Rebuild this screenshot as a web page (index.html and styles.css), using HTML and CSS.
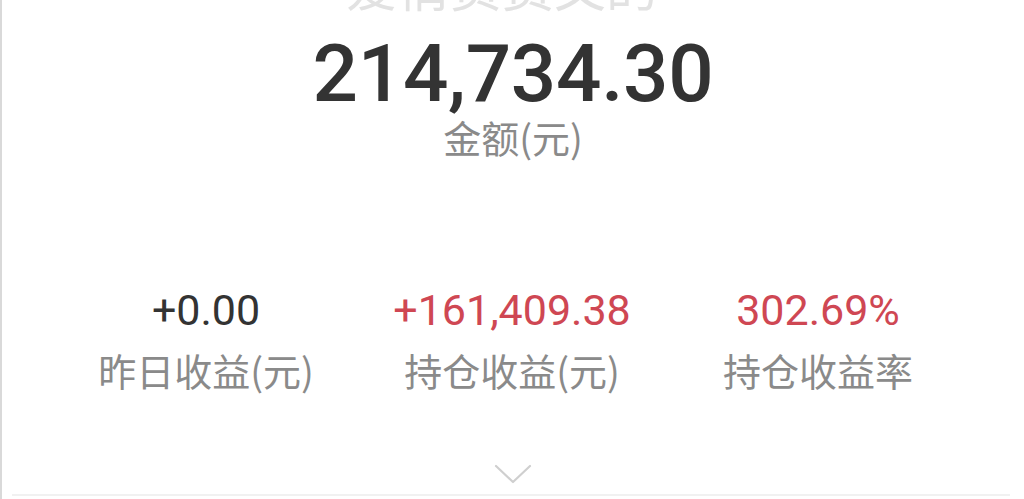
FILE: index.html
```html
<!DOCTYPE html>
<html lang="zh-CN">
<head>
<meta charset="utf-8">
<title>持仓</title>
<link rel="stylesheet" href="styles.css">
</head>
<body>
<div class="page">
  <div class="marquee">爱情资费文的…</div>
  <div class="total">214,734.30</div>
  <div class="total-label">金额(元)</div>
  <div class="stats">
    <div class="stat">
      <div class="val">+0.00</div>
      <div class="lab">昨日收益(元)</div>
    </div>
    <div class="stat">
      <div class="val up">+161,409.38</div>
      <div class="lab">持仓收益(元)</div>
    </div>
    <div class="stat">
      <div class="val up">302.69%</div>
      <div class="lab">持仓收益率</div>
    </div>
  </div>
  <div class="more">
    <svg width="38" height="20" viewBox="0 0 38 20"><polyline points="2,2 19,18 36,2" fill="none" stroke="#cfcfcf" stroke-width="2.2" stroke-linecap="round" stroke-linejoin="round"/></svg>
  </div>
  <div class="divider"></div>
</div>
</body>
</html>
```
FILE: styles.css
```css
html, body {
  margin: 0;
  padding: 0;
  background: #ffffff;
  overflow: hidden;
}
.page {
  height: 499px;
  border-left: 2px solid #d9d9d9;
  box-sizing: border-box;
  display: flex;
  flex-direction: column;
  align-items: center;
  font-family: Roboto, "Noto Sans CJK SC", sans-serif;
  overflow: hidden;
}
.marquee {
  font-family: "Noto Sans CJK SC", sans-serif;
  font-size: 52px;
  line-height: 50px;
  color: #e2e2e2;
  margin-top: -40px;
  height: 50px;
  padding-left: 30px;
}
.total {
  font-family: Roboto, sans-serif;
  font-size: 80px;
  line-height: 80px;
  font-weight: 500;
  color: #333333;
  margin-top: 24px;
  letter-spacing: -0.3px;
}
.total-label {
  font-family: "Noto Sans CJK SC", sans-serif;
  font-size: 38px;
  line-height: 46px;
  color: #8a8a8a;
  margin-top: 0;
}
.stats {
  align-self: stretch;
  display: grid;
  grid-template-columns: 1fr 1fr 1fr;
  padding: 0 53px 0 51px;
  margin-top: 125px;
}
.stat {
  display: flex;
  flex-direction: column;
  align-items: center;
}
.val {
  font-family: Roboto, sans-serif;
  font-size: 43px;
  line-height: 50px;
  color: #333333;
}
.val.up {
  color: #cf4753;
}
.lab {
  font-family: "Noto Sans CJK SC", sans-serif;
  font-size: 38px;
  line-height: 46px;
  color: #8a8a8a;
  margin-top: 12px;
}
.more {
  margin-top: 71px;
  height: 22px;
}
.divider {
  align-self: stretch;
  margin: 8px 14px 0 10px;
  height: 2px;
  background: #f1f1f1;
}
```
